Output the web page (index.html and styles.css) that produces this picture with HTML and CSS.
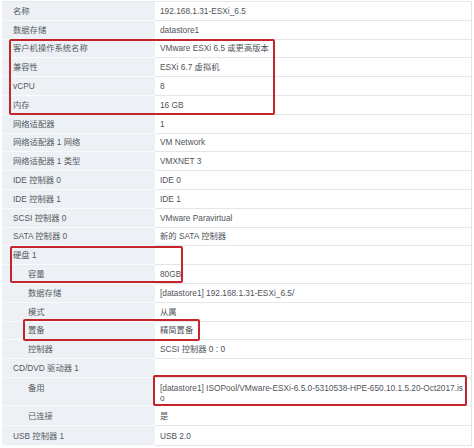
FILE: index.html
```html
<!DOCTYPE html>
<html lang="zh-CN">
<head>
<meta charset="utf-8">
<link rel="stylesheet" href="styles.css">
</head>
<body>
<div class="wrap">
  <div class="props">
    <div class="row"><div class="k">名称</div><div class="v">192.168.1.31-ESXi_6.5</div></div>
    <div class="row"><div class="k">数据存储</div><div class="v">datastore1</div></div>
    <div class="row"><div class="k">客户机操作系统名称</div><div class="v">VMware ESXi 6.5 或更高版本</div></div>
    <div class="row"><div class="k">兼容性</div><div class="v">ESXi 6.7 虚拟机</div></div>
    <div class="row"><div class="k">vCPU</div><div class="v">8</div></div>
    <div class="row"><div class="k">内存</div><div class="v">16 GB</div></div>
    <div class="row"><div class="k">网络适配器</div><div class="v">1</div></div>
    <div class="row"><div class="k">网络适配器 1 网络</div><div class="v">VM Network</div></div>
    <div class="row"><div class="k">网络适配器 1 类型</div><div class="v">VMXNET 3</div></div>
    <div class="row"><div class="k">IDE 控制器 0</div><div class="v">IDE 0</div></div>
    <div class="row"><div class="k">IDE 控制器 1</div><div class="v">IDE 1</div></div>
    <div class="row"><div class="k">SCSI 控制器 0</div><div class="v">VMware Paravirtual</div></div>
    <div class="row"><div class="k">SATA 控制器 0</div><div class="v">新的 SATA 控制器</div></div>
    <div class="row"><div class="k">硬盘 1</div><div class="v"></div></div>
    <div class="row"><div class="k sub">容量</div><div class="v">80GB</div></div>
    <div class="row"><div class="k sub">数据存储</div><div class="v">[datastore1] 192.168.1.31-ESXi_6.5/</div></div>
    <div class="row"><div class="k sub">模式</div><div class="v">从属</div></div>
    <div class="row"><div class="k sub">置备</div><div class="v">精简置备</div></div>
    <div class="row"><div class="k sub">控制器</div><div class="v">SCSI 控制器 0 : 0</div></div>
    <div class="row"><div class="k">CD/DVD 驱动器 1</div><div class="v"></div></div>
    <div class="row tall"><div class="k sub">备用</div><div class="v">[datastore1] ISOPool/VMware-ESXi-6.5.0-5310538-HPE-650.10.1.5.20-Oct2017.is<br>o</div></div>
    <div class="row wide"><div class="k sub">已连接</div><div class="v">是</div></div>
    <div class="row wide"><div class="k">USB 控制器 1</div><div class="v">USB 2.0</div></div>
  </div>
  <div class="mark m1"></div>
  <div class="mark m2"></div>
  <div class="mark m3"></div>
  <div class="mark m4"></div>
</div>
</body>
</html>
```

FILE: styles.css
```css
html, body {
  margin: 0;
  padding: 0;
  background: #ffffff;
}

body {
  font-family: "Liberation Sans", Arial, "Noto Sans CJK SC", sans-serif;
  font-size: 8.3px;
  color: #555a60;
}

.wrap {
  position: relative;
  width: 474px;
  height: 448px;
  padding: 1px 0 0 2px;
  box-sizing: border-box;
}

.props {
  width: 469px;
  border-top: 1px solid #e6e8eb;
  border-right: 1px solid #e2e4e6;
  display: flex;
  flex-direction: column;
}

.row {
  display: grid;
  grid-template-columns: 153px 1fr;
  height: 18.8px;
  flex: none;
  line-height: 10px;
}

.k,
.v {
  display: flex;
  align-items: center;
  white-space: nowrap;
  box-sizing: border-box;
}

.k {
  background: #edf1f5;
  padding-left: 11px;
  border-bottom: 1px solid #f8fafb;
}

.k.sub {
  padding-left: 26px;
}

.v {
  padding-left: 5px;
  background: #ffffff;
  color: #50545a;
  border-bottom: 1px solid #e4e6e8;
}

.row.tall {
  height: 28.2px;
  line-height: 10.5px;
}

.row.wide {
  height: 20px;
}

.row.tall .k,
.row.tall .v {
  display: block;
  padding-top: 5px;
}

.mark {
  position: absolute;
  border: 2px solid #c4252b;
  border-radius: 2px;
  box-sizing: border-box;
}

.m1 { left: 9px; top: 39px; width: 266px; height: 76px; }
.m2 { left: 10px; top: 246px; width: 173px; height: 37px; }
.m3 { left: 23px; top: 319px; width: 177px; height: 22px; }
.m4 { left: 153px; top: 375px; width: 314px; height: 31px; }
```
